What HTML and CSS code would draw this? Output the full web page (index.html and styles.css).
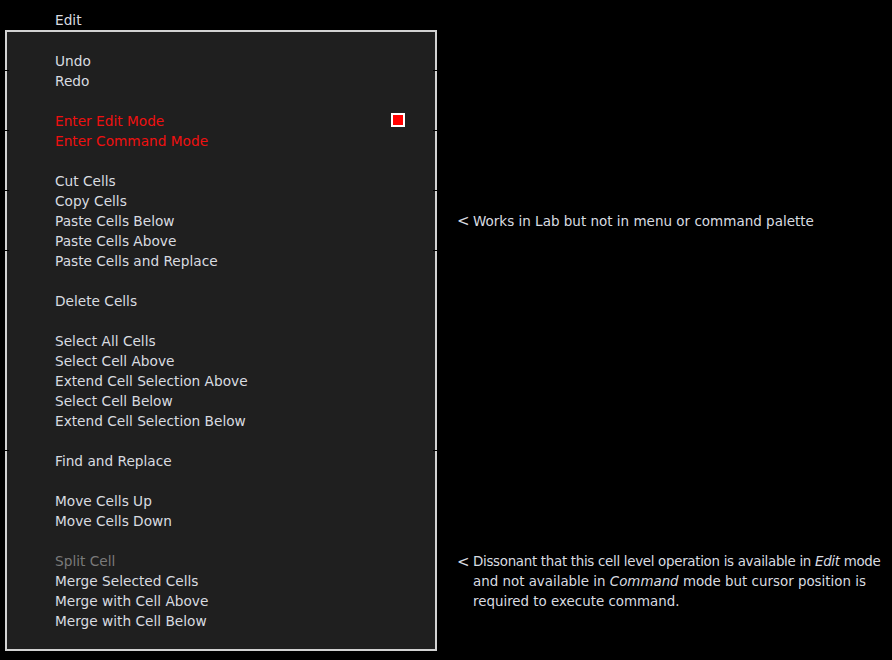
FILE: index.html
```html
<!DOCTYPE html>
<html>
<head>
<meta charset="utf-8">
<link rel="stylesheet" href="styles.css">
</head>
<body>
<div class="title">Edit</div>
<div class="page">
  <div class="menu">
    <div class="tick t1"></div><div class="tick t2"></div><div class="tick t3"></div><div class="tick t4"></div><div class="tick t5"></div>
    <div class="group">
      <div class="item">Undo</div>
      <div class="item">Redo</div>
    </div>
    <div class="group">
      <div class="item red">Enter Edit Mode<span class="check"></span></div>
      <div class="item red">Enter Command Mode</div>
    </div>
    <div class="group">
      <div class="item">Cut Cells</div>
      <div class="item">Copy Cells</div>
      <div class="item">Paste Cells Below</div>
      <div class="item">Paste Cells Above</div>
      <div class="item">Paste Cells and Replace</div>
    </div>
    <div class="group">
      <div class="item">Delete Cells</div>
    </div>
    <div class="group">
      <div class="item">Select All Cells</div>
      <div class="item">Select Cell Above</div>
      <div class="item">Extend Cell Selection Above</div>
      <div class="item">Select Cell Below</div>
      <div class="item">Extend Cell Selection Below</div>
    </div>
    <div class="group">
      <div class="item">Find and Replace</div>
    </div>
    <div class="group">
      <div class="item">Move Cells Up</div>
      <div class="item">Move Cells Down</div>
    </div>
    <div class="group">
      <div class="item disabled">Split Cell</div>
      <div class="item">Merge Selected Cells</div>
      <div class="item">Merge with Cell Above</div>
      <div class="item">Merge with Cell Below</div>
    </div>
  </div>
  <div class="notes">
    <div class="note note1"><span class="lt">&lt;</span><span class="txt">Works in Lab but not in menu or command palette</span></div>
    <div class="note note2"><span class="lt">&lt;</span><span class="txt small"><span class="tight">Dissonant that this cell level operation is available in <em>Edit</em> mode</span><br>and not available in <em>Command</em> mode but cursor position is<br>required to execute command.</span></div>
  </div>
</div>
</body>
</html>
```

FILE: styles.css
```css
html, body {
  margin: 0;
  padding: 0;
  background: #000;
}
body {
  font-family: "DejaVu Sans", Verdana, sans-serif;
  font-size: 13.7px;
  line-height: 20px;
  color: #d9dce0;
}
.title {
  padding: 11px 0 0 55px;
  height: 19px;
  line-height: 19px;
}
.page {
  display: flex;
  align-items: flex-start;
}
.menu {
  position: relative;
  margin-left: 5px;
  border: 2px solid #d2d2d2;
  background: #1f1f1f;
  padding: 19px 0 18px 48px;
  box-sizing: border-box;
  width: 432px;
  display: flex;
  flex-direction: column;
  gap: 20px;
}
.item {
  height: 20px;
  position: relative;
  white-space: nowrap;
}
.red { color: #f01010; }
.disabled { color: #7a7a7a; }
.check {
  position: absolute;
  left: 336px;
  top: 2px;
  width: 10px;
  height: 10px;
  background: #ff0000;
  border: 2px solid #fff;
}
.tick {
  position: absolute;
  left: -3px;
  right: -6px;
  height: 1px;
  pointer-events: none;
}
.tick::before, .tick::after {
  content: "";
  position: absolute;
  top: 0;
  height: 1px;
  width: 4px;
  background: #000;
}
.tick::before { left: 1px; }
.tick::after { right: 2px; width: 6px; }
.t1 { top: 38px; }
.t2 { top: 98px; }
.t3 { top: 158px; }
.t4 { top: 218px; }
.t5 { top: 418px; }
.notes {
  display: flex;
  flex-direction: column;
  margin-left: 20px;
}
.note {
  display: flex;
  white-space: nowrap;
  font-size: 13.5px;
}
.note1 { margin-top: 181px; }
.note2 { margin-top: 321px; }
.lt {
  width: 16px;
  flex: none;
  font-size: 15px;
}
.small {
  font-size: 13.4px;
}
.tight {
  letter-spacing: -0.3px;
}
em {
  font-style: oblique;
}
```
